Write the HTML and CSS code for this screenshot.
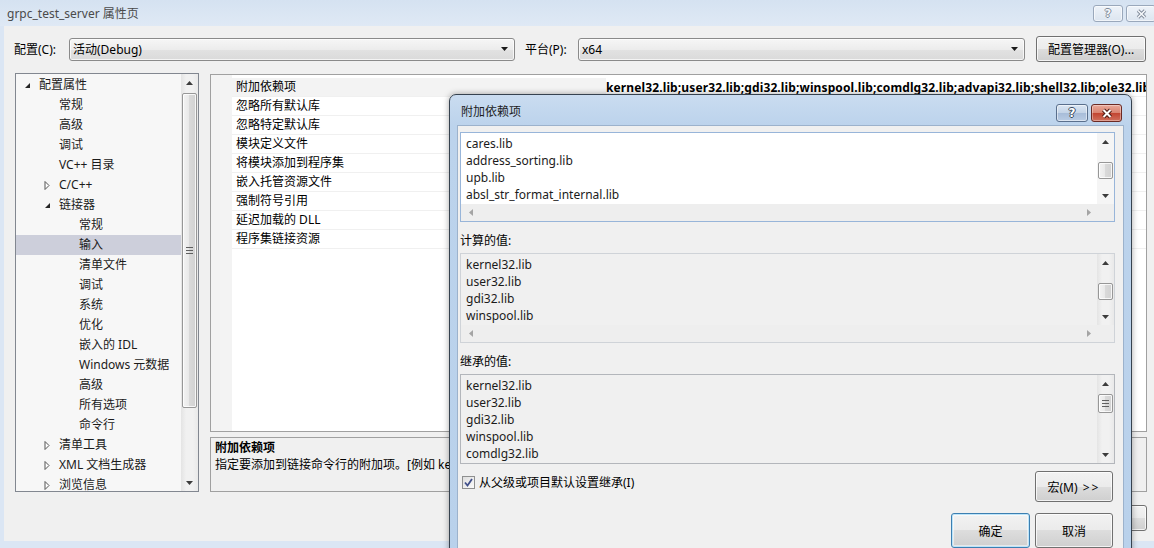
FILE: index.html
```html
<!DOCTYPE html>
<html lang="zh-CN">
<head>
    <meta charset="UTF-8">
    <title>grpc_test_server 属性页</title>
    <link rel="stylesheet" href="styles.css">
</head>
<body>
<div class="window">
    <div class="titlebar">
        <span class="title">grpc_test_server 属性页</span>
        <div class="caption-btns">
            <span class="cap-btn cap-help">?</span>
            <span class="cap-btn cap-close">
                <svg width="13" height="10" viewBox="0 0 13 10"><path class="x-out" d="M3 1.5 L10 8.5 M10 1.5 L3 8.5"/><path class="x-in" d="M3 1.5 L10 8.5 M10 1.5 L3 8.5"/></svg>
            </span>
        </div>
    </div>

    <div class="client">
        <div class="config-row">
            <span class="cfg-label cfg-first">配置(C):</span>
            <div class="combo combo-config">
                <span>活动(Debug)</span>
                <svg class="combo-arrow" width="7" height="4" viewBox="0 0 7 4"><path d="M0 0 L7 0 L3.5 4Z"/></svg>
            </div>
            <span class="cfg-label cfg-second">平台(P):</span>
            <div class="combo combo-platform">
                <span>x64</span>
                <svg class="combo-arrow" width="7" height="4" viewBox="0 0 7 4"><path d="M0 0 L7 0 L3.5 4Z"/></svg>
            </div>
            <button class="btn btn-manager">配置管理器(O)...</button>
        </div>

        <div class="main">
            <div class="tree">
                <div class="tree-list">
                    <div class="tree-row lvl0"><span class="twisty"><svg width="7" height="7" viewBox="0 0 7 7"><path class="open" d="M6 1 L6 6 L1 6Z"/></svg></span>配置属性</div>
                    <div class="tree-row lvl1"><span class="twisty"></span>常规</div>
                    <div class="tree-row lvl1"><span class="twisty"></span>高级</div>
                    <div class="tree-row lvl1"><span class="twisty"></span>调试</div>
                    <div class="tree-row lvl1"><span class="twisty"></span>VC++ 目录</div>
                    <div class="tree-row lvl1"><span class="twisty"><svg width="6" height="9" viewBox="0 0 6 9"><path class="closed" d="M1 0.5 L5 4.5 L1 8.5Z"/></svg></span>C/C++</div>
                    <div class="tree-row lvl1"><span class="twisty"><svg width="7" height="7" viewBox="0 0 7 7"><path class="open" d="M6 1 L6 6 L1 6Z"/></svg></span>链接器</div>
                    <div class="tree-row lvl2"><span class="twisty"></span>常规</div>
                    <div class="tree-row lvl2 selected"><span class="twisty"></span>输入</div>
                    <div class="tree-row lvl2"><span class="twisty"></span>清单文件</div>
                    <div class="tree-row lvl2"><span class="twisty"></span>调试</div>
                    <div class="tree-row lvl2"><span class="twisty"></span>系统</div>
                    <div class="tree-row lvl2"><span class="twisty"></span>优化</div>
                    <div class="tree-row lvl2"><span class="twisty"></span>嵌入的 IDL</div>
                    <div class="tree-row lvl2"><span class="twisty"></span>Windows 元数据</div>
                    <div class="tree-row lvl2"><span class="twisty"></span>高级</div>
                    <div class="tree-row lvl2"><span class="twisty"></span>所有选项</div>
                    <div class="tree-row lvl2"><span class="twisty"></span>命令行</div>
                    <div class="tree-row lvl1"><span class="twisty"><svg width="6" height="9" viewBox="0 0 6 9"><path class="closed" d="M1 0.5 L5 4.5 L1 8.5Z"/></svg></span>清单工具</div>
                    <div class="tree-row lvl1"><span class="twisty"><svg width="6" height="9" viewBox="0 0 6 9"><path class="closed" d="M1 0.5 L5 4.5 L1 8.5Z"/></svg></span>XML 文档生成器</div>
                    <div class="tree-row lvl1"><span class="twisty"><svg width="6" height="9" viewBox="0 0 6 9"><path class="closed" d="M1 0.5 L5 4.5 L1 8.5Z"/></svg></span>浏览信息</div>
                </div>
                <div class="vscroll">
                    <div class="sb-arrow"><svg width="7" height="4" viewBox="0 0 7 4"><path d="M0 4 L3.5 0 L7 4Z"/></svg></div>
                    <div class="sb-track"><div class="sb-thumb thumb-tree"><span class="grip"></span></div></div>
                    <div class="sb-arrow"><svg width="7" height="4" viewBox="0 0 7 4"><path d="M0 0 L7 0 L3.5 4Z"/></svg></div>
                </div>
            </div>

            <div class="right-pane">
                <div class="prop-grid">
                    <div class="prop-row current">
                        <span class="prop-name">附加依赖项</span>
                        <span class="prop-value">kernel32.lib;user32.lib;gdi32.lib;winspool.lib;comdlg32.lib;advapi32.lib;shell32.lib;ole32.lib;oleaut32.lib;uuid.lib;odbc32.lib;odbccp32.lib</span>
                    </div>
                    <div class="prop-row"><span class="prop-name">忽略所有默认库</span></div>
                    <div class="prop-row"><span class="prop-name">忽略特定默认库</span></div>
                    <div class="prop-row"><span class="prop-name">模块定义文件</span></div>
                    <div class="prop-row"><span class="prop-name">将模块添加到程序集</span></div>
                    <div class="prop-row"><span class="prop-name">嵌入托管资源文件</span></div>
                    <div class="prop-row"><span class="prop-name">强制符号引用</span></div>
                    <div class="prop-row"><span class="prop-name">延迟加载的 DLL</span></div>
                    <div class="prop-row"><span class="prop-name">程序集链接资源</span></div>
                </div>
                <div class="desc">
                    <div class="desc-title">附加依赖项</div>
                    <div class="desc-text">指定要添加到链接命令行的附加项。[例如 kernel32.lib]</div>
                </div>
            </div>
        </div>

        <div class="footer">
            <button class="btn btn-main">确定</button>
            <button class="btn btn-main">取消</button>
            <button class="btn btn-main">应用(A)</button>
        </div>
    </div>
</div>

<!-- 附加依赖项 对话框 -->
<div class="dialog">
    <div class="dlg-titlebar">
        <span class="dlg-title">附加依赖项</span>
        <span class="dlg-btn dlg-help">?</span>
        <span class="dlg-btn dlg-close">
            <svg width="14" height="11" viewBox="0 0 14 11"><path class="x-out" d="M3.5 2 L10.5 9 M10.5 2 L3.5 9"/><path class="x-in" d="M3.5 2 L10.5 9 M10.5 2 L3.5 9"/></svg>
        </span>
    </div>
    <div class="dlg-client">
        <div class="listbox edit-box with-hscroll">
            <div class="list-lines">
                <div>cares.lib</div>
                <div>address_sorting.lib</div>
                <div>upb.lib</div>
                <div>absl_str_format_internal.lib</div>
            </div>
            <div class="vscroll">
                <div class="sb-arrow"><svg width="7" height="4" viewBox="0 0 7 4"><path d="M0 4 L3.5 0 L7 4Z"/></svg></div>
                <div class="sb-track"><div class="sb-thumb thumb-small"></div></div>
                <div class="sb-arrow"><svg width="7" height="4" viewBox="0 0 7 4"><path d="M0 0 L7 0 L3.5 4Z"/></svg></div>
            </div>
            <div class="hscroll">
                <svg width="4" height="7" viewBox="0 0 4 7"><path d="M4 0 L4 7 L0 3.5Z"/></svg>
                <svg width="4" height="7" viewBox="0 0 4 7"><path d="M0 0 L4 3.5 L0 7Z"/></svg>
            </div>
            <div class="sb-corner"></div>
        </div>

        <div class="dlg-label">计算的值:</div>
        <div class="listbox readonly-box with-hscroll">
            <div class="list-lines">
                <div>kernel32.lib</div>
                <div>user32.lib</div>
                <div>gdi32.lib</div>
                <div>winspool.lib</div>
            </div>
            <div class="vscroll">
                <div class="sb-arrow"><svg width="7" height="4" viewBox="0 0 7 4"><path d="M0 4 L3.5 0 L7 4Z"/></svg></div>
                <div class="sb-track"><div class="sb-thumb thumb-small"></div></div>
                <div class="sb-arrow"><svg width="7" height="4" viewBox="0 0 7 4"><path d="M0 0 L7 0 L3.5 4Z"/></svg></div>
            </div>
            <div class="hscroll">
                <svg width="4" height="7" viewBox="0 0 4 7"><path d="M4 0 L4 7 L0 3.5Z"/></svg>
                <svg width="4" height="7" viewBox="0 0 4 7"><path d="M0 0 L4 3.5 L0 7Z"/></svg>
            </div>
            <div class="sb-corner"></div>
        </div>

        <div class="dlg-label">继承的值:</div>
        <div class="listbox inherit-box">
            <div class="list-lines">
                <div>kernel32.lib</div>
                <div>user32.lib</div>
                <div>gdi32.lib</div>
                <div>winspool.lib</div>
                <div>comdlg32.lib</div>
            </div>
            <div class="vscroll">
                <div class="sb-arrow"><svg width="7" height="4" viewBox="0 0 7 4"><path d="M0 4 L3.5 0 L7 4Z"/></svg></div>
                <div class="sb-track"><div class="sb-thumb thumb-inherit"><span class="grip"></span></div></div>
                <div class="sb-arrow"><svg width="7" height="4" viewBox="0 0 7 4"><path d="M0 0 L7 0 L3.5 4Z"/></svg></div>
            </div>
        </div>

        <div class="inherit-row">
            <label class="check">
                <span class="check-box"><svg width="9" height="9" viewBox="0 0 9 9"><path d="M1 4.5 L3.5 7.5 L8 1"/></svg></span>
                <span>从父级或项目默认设置继承(I)</span>
            </label>
            <button class="btn btn-dlg">宏(M) <span class="chevrons">&gt;&gt;</span></button>
        </div>

        <div class="dlg-footer">
            <button class="btn btn-dlg btn-default">确定</button>
            <button class="btn btn-dlg">取消</button>
        </div>
    </div>
</div>
</body>
</html>
```

FILE: styles.css
```css
* {
    box-sizing: border-box;
}
html, body {
    margin: 0;
    padding: 0;
}
body {
    width: 1154px;
    height: 548px;
    overflow: hidden;
    position: relative;
    font-family: "Noto Sans", "Noto Sans CJK SC", sans-serif;
    font-size: 12px;
    color: #000;
    background: #dbe6f4;
}
svg {
    display: block;
}

/* ---------- main window ---------- */
.window {
    display: flex;
    flex-direction: column;
    height: 548px;
}
.titlebar {
    height: 26px;
    display: flex;
    justify-content: space-between;
    align-items: flex-start;
    padding-left: 7px;
    background: linear-gradient(#d5e2f1, #dfe9f5);
}
.title {
    color: #4a4a4a;
    line-height: 16px;
    margin-top: 6px;
}
.caption-btns {
    display: flex;
    gap: 3px;
    margin-top: 5px;
    margin-right: -2px;
}
.cap-btn {
    width: 30px;
    height: 17px;
    border: 1px solid #9aa8bb;
    border-radius: 3px;
    background: linear-gradient(#eef3f9, #dce5f0);
    display: flex;
    align-items: center;
    justify-content: center;
    box-shadow: inset 0 0 0 1px rgba(255,255,255,0.6);
}
.cap-help {
    font-family: "DejaVu Sans", sans-serif;
    font-weight: bold;
    font-size: 11px;
    color: #f6f8fb;
    text-shadow: 1px 0 0 #7f8a99, -1px 0 0 #7f8a99, 0 1px 0 #7f8a99, 0 -1px 0 #7f8a99;
}
.cap-close .x-out {
    stroke: #7f8a99;
    stroke-width: 3.4;
    fill: none;
}
.cap-close .x-in {
    stroke: #f6f8fb;
    stroke-width: 1.6;
    fill: none;
}
.client {
    flex: 1;
    margin: 0 0 7px 4px;
    background: #f0f0f0;
    display: flex;
    flex-direction: column;
    padding: 10px 7px 10px 10px;
}

.config-row {
    display: flex;
    align-items: center;
    height: 26px;
}
.cfg-label {
    flex: none;
}
.cfg-first {
    width: 55px;
}
.cfg-second {
    width: 53px;
    margin-left: 10px;
}
.combo {
    height: 23px;
    border: 1px solid #8a8a8a;
    border-radius: 3px;
    background: linear-gradient(#f6f6f6, #ececec 50%, #e2e2e2 50%, #dadada);
    display: flex;
    align-items: center;
    justify-content: space-between;
    padding: 0 6px 0 3px;
    box-shadow: inset 0 0 0 1px rgba(255,255,255,0.7);
}
.combo-config {
    width: 446px;
}
.combo-platform {
    width: 447px;
}
.combo-arrow path {
    fill: #1a1a1a;
}

.btn {
    font: inherit;
    color: #000;
    border: 1px solid #707070;
    border-radius: 3px;
    background: linear-gradient(#f2f2f2, #ebebeb 50%, #dddddd 50%, #cfcfcf);
    box-shadow: inset 0 0 0 1px rgba(255,255,255,0.75);
    padding: 0;
}
.btn-manager {
    width: 110px;
    height: 26px;
    margin-left: 11px;
}

.main {
    display: flex;
    margin-top: 11px;
    height: 419px;
}

/* tree */
.tree {
    width: 184px;
    margin-left: 1px;
    border: 1px solid #828790;
    background: #f7f7f7;
    display: flex;
}
.tree-list {
    flex: 1;
    overflow: hidden;
    padding-top: 1px;
}
.tree-row {
    height: 20px;
    line-height: 20px;
    display: flex;
    align-items: center;
    white-space: nowrap;
    color: #1b1b1b;
}
.tree-row.lvl0 { padding-left: 5px; }
.tree-row.lvl1 { padding-left: 25px; }
.tree-row.lvl2 { padding-left: 45px; }
.tree-row.selected {
    background: #cdcfdb;
}
.twisty {
    width: 18px;
    flex: none;
    display: flex;
    align-items: center;
    padding-left: 3px;
}
.twisty .open {
    fill: #262626;
}
.twisty .closed {
    fill: #fff;
    stroke: #555;
    stroke-width: 1;
}

/* scrollbars */
.vscroll {
    width: 17px;
    flex: none;
    display: flex;
    flex-direction: column;
    background: linear-gradient(to right, #e4e4e4, #f1f1f1 30%, #f1f1f1 70%, #e9e9e9);
}
.sb-arrow {
    height: 17px;
    flex: none;
    display: flex;
    align-items: center;
    justify-content: center;
}
.sb-arrow path {
    fill: #3c3c3c;
}
.sb-track {
    flex: 1;
    padding: 0 1px;
}
.sb-thumb {
    border: 1px solid #979797;
    border-radius: 2px;
    background: linear-gradient(to right, #f3f3f3, #e8e8e8 50%, #d9d9d9 50%, #d2d2d2);
    box-shadow: inset 0 0 0 1px rgba(255,255,255,0.8);
    display: flex;
    align-items: center;
    justify-content: center;
}
.thumb-tree {
    margin-top: 2px;
    height: 315px;
}
.thumb-small {
    margin-top: 12px;
    height: 17px;
}
.thumb-inherit {
    margin-top: 2px;
    height: 19px;
}
.grip {
    width: 7px;
    height: 7px;
    background: repeating-linear-gradient(#5f5f5f 0, #5f5f5f 1px, transparent 1px, transparent 3px);
}

/* right pane */
.right-pane {
    flex: 1;
    margin-left: 11px;
    margin-top: 1px;
    display: flex;
    flex-direction: column;
    min-width: 0;
}
.prop-grid {
    height: 358px;
    border: 1px solid #a0a0a0;
    padding-top: 3px;
    overflow: hidden;
    background: linear-gradient(to right, #f3f3f3 21px, #fff 21px);
}
.prop-row {
    height: 19px;
    margin-left: 21px;
    display: flex;
    align-items: center;
    border-bottom: 1px solid #f0f0f0;
    white-space: nowrap;
}
.prop-name {
    width: 374px;
    flex: none;
    padding-left: 4px;
    height: 18px;
    line-height: 18px;
}
.prop-row.current .prop-name {
    background: #f3f3f3;
}
.prop-value {
    font-weight: bold;
    letter-spacing: 0.12px;
}
.desc {
    margin-top: 5px;
    height: 55px;
    border: 1px solid #a0a0a0;
    padding: 1px 4px;
    white-space: nowrap;
    overflow: hidden;
}
.desc-title {
    font-weight: bold;
    line-height: 17px;
}
.desc-text {
    line-height: 17px;
}

.footer {
    display: flex;
    justify-content: flex-end;
    gap: 6px;
    margin-top: 13px;
}
.btn-main {
    width: 75px;
    height: 26px;
}

/* ---------- dialog ---------- */
.dialog {
    position: absolute;
    left: 449px;
    top: 94px;
    width: 683px;
    height: 470px;
    border: 1px solid #36424f;
    border-radius: 7px 7px 0 0;
    background: linear-gradient(#cadcf0, #bcd3ec 30px, #b9d1eb);
    padding: 0 7px;
    display: flex;
    flex-direction: column;
    box-shadow: 0 0 6px rgba(0,0,0,0.35);
}
.dlg-titlebar {
    height: 30px;
    display: flex;
    align-items: flex-start;
    margin: 0 -7px;
    padding: 0 9px 0 11px;
}
.dlg-title {
    flex: 1;
    margin-top: 9px;
    line-height: 16px;
    color: #1e1e1e;
}
.dlg-btn {
    margin-top: 9px;
    height: 18px;
    border-radius: 3px;
    display: flex;
    align-items: center;
    justify-content: center;
}
.dlg-help {
    width: 32px;
    border: 1px solid #5a6f8c;
    background: linear-gradient(#dbe6f3, #c3d3e7 50%, #a7bcd8 50%, #b9cce4);
    box-shadow: inset 0 0 0 1px rgba(255,255,255,0.5);
    font-family: "DejaVu Sans", sans-serif;
    font-weight: bold;
    font-size: 12px;
    color: #fff;
    text-shadow: 1px 0 0 #3b4a5e, -1px 0 0 #3b4a5e, 0 1px 0 #3b4a5e, 0 -1px 0 #3b4a5e;
}
.dlg-close {
    width: 31px;
    margin-left: 3px;
    border: 1px solid #6b2a24;
    background: linear-gradient(#e9a99b, #d9826f 50%, #c2432f 50%, #d0705d);
    box-shadow: inset 0 0 0 1px rgba(255,255,255,0.35);
}
.dlg-close .x-out {
    stroke: #4d1a14;
    stroke-width: 4;
    fill: none;
}
.dlg-close .x-in {
    stroke: #fff;
    stroke-width: 2;
    fill: none;
}
.dlg-client {
    flex: 1;
    background: #f0f0f0;
    border: 1px solid #9cb2cc;
    border-bottom: none;
    padding: 6px 8px 0 2px;
    display: flex;
    flex-direction: column;
}

.listbox {
    height: 90px;
    flex: none;
    border: 1px solid #abadb3;
    display: grid;
    grid-template-columns: 1fr 17px;
    grid-template-rows: 1fr;
    overflow: hidden;
}
.listbox.with-hscroll {
    grid-template-rows: 1fr 17px;
}
.edit-box {
    background: #fff;
    border-color: #98b5d9;
}
.readonly-box {
    background: #f0f0f0;
    border-color: #cfd3d8;
}
.inherit-box {
    background: #f0f0f0;
    border-color: #b3b6bb;
}
.list-lines {
    padding: 2px 0 0 5px;
    line-height: 17px;
    white-space: nowrap;
    overflow: hidden;
    color: #1b1b1b;
}
.edit-box .vscroll {
    background: #f5f5f5;
}
.hscroll {
    display: flex;
    align-items: center;
    justify-content: space-between;
    padding: 0 6px 0 8px;
    background: #eeeeee;
}
.hscroll path {
    fill: #a4a4a4;
}
.sb-corner {
    background: #eeeeee;
}
.dlg-label {
    margin-top: 10px;
    margin-bottom: 4px;
    line-height: 17px;
}

.inherit-row {
    display: flex;
    justify-content: space-between;
    align-items: flex-start;
    margin-top: 7px;
    margin-right: 2px;
}
.check {
    display: flex;
    align-items: center;
    gap: 4px;
    margin-top: 3px;
    margin-left: 2px;
    line-height: 17px;
}
.check-box {
    width: 13px;
    height: 13px;
    border: 1px solid #8e8f8f;
    background: linear-gradient(135deg, #dedede, #fbfbfb);
    display: flex;
    align-items: center;
    justify-content: center;
}
.check-box path {
    fill: none;
    stroke: #41508a;
    stroke-width: 1.8;
}
.btn-dlg {
    width: 78px;
    height: 31px;
}
.chevrons {
    letter-spacing: 2px;
    margin-left: 2px;
}
.dlg-footer {
    display: flex;
    justify-content: flex-end;
    gap: 5px;
    margin-top: 11px;
    margin-right: 2px;
}
.dlg-footer .btn-dlg {
    height: 35px;
}
.btn-default {
    width: 79px;
    border-color: #3c7fb1;
    box-shadow: inset 0 0 0 1px #bde4f9, inset 0 0 0 2px rgba(255,255,255,0.5);
}
```
